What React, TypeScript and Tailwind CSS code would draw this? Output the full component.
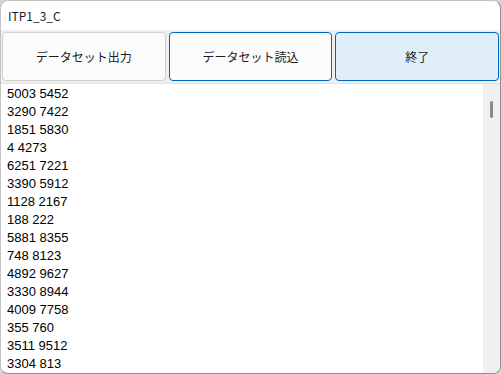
const lines = [
  "5003 5452",
  "3290 7422",
  "1851 5830",
  "4 4273",
  "6251 7221",
  "3390 5912",
  "1128 2167",
  "188 222",
  "5881 8355",
  "748 8123",
  "4892 9627",
  "3330 8944",
  "4009 7758",
  "355 760",
  "3511 9512",
  "3304 813",
]

export default function App() {
  return (
    <div className="w-[501px] h-[374px] bg-[#d6d6d6] overflow-hidden">
      <div
        className="h-[374px] w-[501px] flex flex-col bg-white rounded-[8px] overflow-hidden border border-[#c4c4c4] border-r-[#8e8e8e] border-b-[#8e8e8e]"
        style={{ fontFamily: '"Noto Sans CJK JP", "Noto Sans", sans-serif' }}
      >
        <div className="h-[29px] shrink-0 flex items-center pl-[7px] text-[12px] text-[#1b1b1b]">
          ITP1_3_C
        </div>
        <div className="shrink-0 bg-[#efefef] grid grid-cols-3 gap-[3px] px-[1px] py-[2px]">
          <button className="h-[49px] rounded-[4px] border border-[#cfcfcf] bg-[#fbfbfb] text-[12px] text-[#1b1b1b]">
            データセット出力
          </button>
          <button className="h-[49px] rounded-[4px] border border-[#0067c0] bg-[#fbfbfb] text-[12px] text-[#1b1b1b]">
            データセット読込
          </button>
          <button className="h-[49px] rounded-[4px] border border-[#0067c0] bg-[#e0eef9] text-[12px] text-[#1b1b1b]">
            終了
          </button>
        </div>
        <div className="flex-1 flex min-h-0 border-t border-[#e3e3e3]">
          <div className="flex-1 overflow-hidden pl-[6px] pt-[1px] text-[13px] leading-[18px] text-black font-['Liberation_Sans',sans-serif]">
            {lines.map((l, i) => (
              <div key={i}>{l}</div>
            ))}
          </div>
          <div className="w-[17px] shrink-0 bg-[#f0f0f0] flex justify-center pt-[17px]">
            <div className="w-[3px] h-[17px] rounded-full bg-[#8a8a8a]" />
          </div>
        </div>
      </div>
    </div>
  )
}
